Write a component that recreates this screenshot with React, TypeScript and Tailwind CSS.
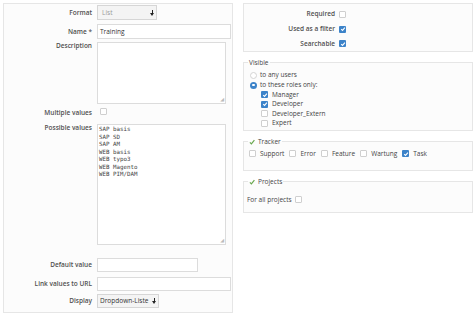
import React from 'react';

const font = { fontFamily: '"Open Sans", "DejaVu Sans", sans-serif' };

function Box({ checked }: { checked?: boolean }) {
  if (checked) {
    return (
      <span className="inline-flex w-[7px] h-[7px] rounded-[1px] bg-[#3c83c9] items-center justify-center shrink-0">
        <svg width="6" height="6" viewBox="0 0 10 10">
          <path d="M2 5.2 L4.2 7.4 L8.2 2.8" fill="none" stroke="#fff" strokeWidth="1.8" />
        </svg>
      </span>
    );
  }
  return <span className="inline-block w-[7px] h-[7px] rounded-[1px] border border-[#cfcfcf] bg-white shrink-0" />;
}

function Radio({ checked }: { checked?: boolean }) {
  if (checked) {
    return (
      <span className="inline-flex w-[7px] h-[7px] rounded-full bg-[#3c83c9] items-center justify-center shrink-0">
        <span className="w-[2.5px] h-[2.5px] rounded-full bg-white" />
      </span>
    );
  }
  return <span className="inline-block w-[7px] h-[7px] rounded-full border border-[#d4d4d4] bg-white shrink-0" />;
}

function Arrow() {
  return (
    <span className="ml-auto mr-[2px] flex flex-col items-center">
      <span className="w-[1px] h-[3px] bg-[#222]" />
      <span className="w-0 h-0 border-l-[2px] border-r-[2px] border-t-[3px] border-l-transparent border-r-transparent border-t-[#222]" />
    </span>
  );
}

function Row({ label, top, children, mt, h, req }: { label: string; top?: boolean; children: React.ReactNode; mt: string; h: string; req?: boolean }) {
  return (
    <div className={`flex ${mt} ${h} ${top ? 'items-start' : 'items-center'}`}>
      <div className={`w-[93px] shrink-0 pr-[5px] text-right font-semibold text-[#505050] ${top ? 'leading-[8px]' : ''}`}>
        {label}
        {req && <span className="text-[#666]"> *</span>}
      </div>
      {children}
    </div>
  );
}

const roles = [
  { n: 'Manager', c: true },
  { n: 'Developer', c: true },
  { n: 'Developer_Extern', c: false },
  { n: 'Expert', c: false },
];

const trackers = [
  { n: 'Support', c: false },
  { n: 'Error', c: false },
  { n: 'Feature', c: false },
  { n: 'Wartung', c: false },
  { n: 'Task', c: true },
];

function Check() {
  return (
    <svg width="6" height="6" viewBox="0 0 10 10" className="inline-block mr-[3px]">
      <path d="M1.5 5.5 L4 8 L9 2" fill="none" stroke="#6aa84f" strokeWidth="2" />
    </svg>
  );
}

export default function App() {
  return (
    <div className="w-[474px] h-[317px] bg-white pl-[3px] pt-[3px] flex gap-[10px] text-[6.5px] text-[#444]" style={font}>
      {/* linke Spalte */}
      <div className="w-[230px] shrink-0 h-[310px] border border-[#e6e6e6] bg-[#fcfcfc] flex flex-col">
        <Row label="Format" mt="mt-[1px]" h="h-[15px]">
          <div className="w-[60px] h-full border border-[#d6d6d6] bg-[#f4f4f4] flex items-center pl-[4px] text-[#999]">
            List
            <Arrow />
          </div>
        </Row>
        <Row label="Name" req mt="mt-[4px]" h="h-[15px]">
          <div className="w-[134px] h-full border border-[#dcdcdc] bg-white flex items-center pl-[2px] text-[#333]">Training</div>
        </Row>
        <Row label="Description" top mt="mt-[3px]" h="h-[62px]">
          <div className="relative w-[129px] h-full border border-[#dcdcdc] bg-white">
            <span className="absolute right-[1px] bottom-[1px] text-[#bbb] text-[5px] leading-none">◢</span>
          </div>
        </Row>
        <Row label="Multiple values" mt="mt-[4px]" h="h-[10px]">
          <span className="ml-[3px]">
            <Box />
          </span>
        </Row>
        <Row label="Possible values" top mt="mt-[6px]" h="h-[121px]">
          <div className="relative w-[129px] h-full border border-[#dcdcdc] bg-white pl-[1px] pt-[1px]">
            <pre className="text-[5.8px] leading-[7.5px] text-[#444]" style={{ fontFamily: '"DejaVu Sans Mono", monospace' }}>
              {'SAP basis\nSAP SD\nSAP AM\nWEB basis\nWEB typo3\nWEB Magento\nWEB PIM/DAM'}
            </pre>
            <span className="absolute right-[1px] bottom-[1px] text-[#bbb] text-[5px] leading-none">◢</span>
          </div>
        </Row>
        <Row label="Default value" mt="mt-[13px]" h="h-[14px]">
          <div className="w-[101px] h-full border border-[#dcdcdc] bg-white" />
        </Row>
        <Row label="Link values to URL" mt="mt-[5px]" h="h-[14px]">
          <div className="w-[134px] h-full border border-[#dcdcdc] bg-white" />
        </Row>
        <Row label="Display" mt="mt-[3px]" h="h-[14px]">
          <div className="w-[62px] h-full border border-[#d6d6d6] bg-[#f4f4f4] flex items-center pl-[2px] text-[#333]">
            Dropdown-Liste
            <Arrow />
          </div>
        </Row>
      </div>

      {/* rechte Spalte */}
      <div className="w-[230px] shrink-0 flex flex-col">
        <div className="h-[49px] border border-[#e6e6e6] bg-[#fcfcfc] flex flex-col pt-[3px]">
          {[
            { n: 'Required', c: false },
            { n: 'Used as a filter', c: true },
            { n: 'Searchable', c: true },
          ].map((r) => (
            <div key={r.n} className="flex items-center h-[15px]">
              <div className="w-[95px] shrink-0 pr-[4px] text-right font-semibold text-[#505050]">{r.n}</div>
              <Box checked={r.c} />
            </div>
          ))}
        </div>

        <fieldset className="mt-[6px] h-[73px] border border-[#e6e6e6] bg-[#fcfcfc] px-[6px] pb-[2px]">
          <legend className="ml-[-2px] px-[1px] leading-[9px] text-[#444]">Visible</legend>
          <div className="flex flex-col pt-[3px]">
            <div className="flex items-center gap-[3px] h-[10px]">
              <Radio />
              <span>to any users</span>
            </div>
            <div className="flex items-center gap-[3px] h-[10px]">
              <Radio checked />
              <span>to these roles only:</span>
            </div>
            {roles.map((r) => (
              <div key={r.n} className="flex items-center gap-[4px] h-[9.5px] pl-[11px]">
                <Box checked={r.c} />
                <span>{r.n}</span>
              </div>
            ))}
          </div>
        </fieldset>

        <fieldset className="mt-[6px] h-[34px] border border-[#e6e6e6] bg-[#fcfcfc] px-[5px]">
          <legend className="ml-[-1px] px-[1px] leading-[9px] flex items-center text-[#444]">
            <Check />
            Tracker
          </legend>
          <div className="flex items-center h-[9px] mt-[3px]">
            {trackers.map((t) => (
              <span key={t.n} className="flex items-center gap-[4px] mr-[5px]">
                <Box checked={t.c} />
                <span>{t.n}</span>
              </span>
            ))}
          </div>
        </fieldset>

        <fieldset className="mt-[6px] h-[36px] border border-[#e6e6e6] bg-[#fcfcfc] px-[3px]">
          <legend className="ml-[1px] px-[1px] leading-[9px] flex items-center text-[#444]">
            <Check />
            Projects
          </legend>
          <div className="flex items-center gap-[3px] mt-[9px] h-[9px]">
            <span>For all projects</span>
            <Box />
          </div>
        </fieldset>
      </div>
    </div>
  );
}
